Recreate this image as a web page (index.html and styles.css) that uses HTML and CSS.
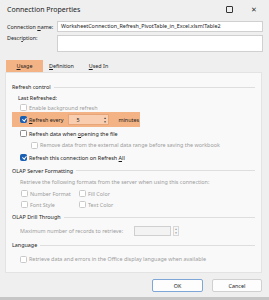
FILE: index.html
```html
<!DOCTYPE html>
<html lang="en">
<head>
    <meta charset="UTF-8">
    <title>Connection Properties</title>
    <link rel="stylesheet" href="styles.css">
</head>
<body>
    <div class="window">
        <div class="titlebar">
            <span class="title">Connection Properties</span>
            <div class="controls">
                <span class="ctl-max"></span>
                <span class="ctl-close">✕</span>
            </div>
        </div>

        <div class="field">
            <label>Connection <u>n</u>ame:</label>
            <div class="input">WorksheetConnection_Refresh_PivotTable_in_Excel.xlsm!Table2</div>
        </div>
        <div class="field field-desc">
            <label>Descr<u>i</u>ption:</label>
            <div class="input input-tall"></div>
        </div>

        <div class="tabs">
            <span class="tab active"><u>U</u>sage</span>
            <span class="tab"><u>D</u>efinition</span>
            <span class="tab"><u>U</u>sed In</span>
        </div>

        <div class="panel">
            <div class="legend h12"><span>Refresh control</span></div>
            <div class="row h10 indent-6">Last Refreshed:</div>
            <div class="row h9 indent-8 disabled"><span class="cb"></span><span>Enable background refresh</span></div>
            <div class="band">
                <span class="cb checked"></span>
                <span><u>R</u>efresh every</span>
                <div class="spin-input">
                    <span>5</span>
                    <span class="arrows"><i>▲</i><i>▼</i></span>
                </div>
                <span>minutes</span>
            </div>
            <div class="row h13 indent-8"><span class="cb"></span><span>Refresh data when <u>o</u>pening the file</span></div>
            <div class="row h10 indent-19 disabled"><span class="cb"></span><span>Remove data from the external data range before saving the workbook</span></div>
            <div class="row h15 indent-8"><span class="cb checked"></span><span>Refresh this connection on Refresh <u>A</u>ll</span></div>

            <div class="legend h11"><span>OLAP Server Formatting</span></div>
            <div class="row h12 indent-8 disabled">Retrieve the following formats from the server when using this connection:</div>
            <div class="row h11 indent-9 disabled">
                <span class="opt"><span class="cb"></span><span>Number Format</span></span>
                <span class="opt"><span class="cb"></span><span>Fill Color</span></span>
            </div>
            <div class="row h11 indent-9 disabled">
                <span class="opt"><span class="cb"></span><span>Font Style</span></span>
                <span class="opt"><span class="cb"></span><span>Text Color</span></span>
            </div>

            <div class="legend h14"><span>OLAP Drill Through</span></div>
            <div class="row h13 indent-8 disabled">
                <span class="max-label">Maximum number of records to retrieve:</span>
                <div class="max-input"></div>
                <span class="max-spin"><i>▲</i><i>▼</i></span>
            </div>

            <div class="legend h16"><span>Language</span></div>
            <div class="row h12 indent-8 disabled"><span class="cb"></span><span>Retrieve data and errors in the Office display language when available</span></div>
        </div>

        <div class="buttons">
            <button class="btn default">OK</button>
            <button class="btn">Cancel</button>
        </div>
    </div>
</body>
</html>
```

FILE: styles.css
```css
body {
    margin: 0;
    font-family: "Noto Sans", "Open Sans", sans-serif;
    font-size: 5.4px;
    color: #1b1b1b;
    background: #efefef;
}

.window {
    width: 269px;
    height: 300px;
    box-sizing: border-box;
    background: #efefef;
    border-bottom: 3px solid #c6c6c6;
    display: flex;
    flex-direction: column;
}

/* title bar */
.titlebar {
    height: 18px;
    display: flex;
    align-items: center;
    padding-left: 7px;
}

.title {
    font-size: 7px;
    color: #222;
}

.controls {
    margin-left: auto;
    display: flex;
    align-items: center;
}

.ctl-max {
    width: 5px;
    height: 5px;
    border: 1px solid #333;
    border-radius: 1px;
    margin-right: 18px;
}

.ctl-close {
    font-size: 7px;
    color: #333;
    margin-right: 12px;
}

/* name + description */
.field {
    display: flex;
    align-items: center;
    padding: 0 6px 0 7px;
    margin-top: 3px;
}

.field label {
    width: 50px;
    flex-shrink: 0;
}

.field-desc {
    align-items: flex-start;
}

.field-desc label {
    line-height: 7px;
}

.input {
    flex: 1;
    height: 11px;
    box-sizing: border-box;
    border: 1px solid #d0d0d0;
    background: #fff;
    padding-left: 3px;
    line-height: 9px;
    white-space: nowrap;
    overflow: hidden;
}

.input-tall {
    height: 17px;
}

/* tabs */
.tabs {
    display: flex;
    margin-top: 8px;
    padding-left: 6px;
    height: 12px;
}

.tab {
    width: 37px;
    text-align: center;
    line-height: 12px;
}

.tab.active {
    background: #f4b385;
}

/* panel */
.panel {
    height: 201px;
    box-sizing: border-box;
    margin: 0 7px 0 5px;
    background: #f9f9f9;
    border: 1px solid #e3e3e3;
    padding: 8px 6px 0 6px;
    display: flex;
    flex-direction: column;
}

.legend {
    display: flex;
    align-items: center;
    gap: 3px;
}

.legend::after {
    content: "";
    flex: 1;
    height: 1px;
    background: #dedede;
}

.row {
    display: flex;
    align-items: center;
    white-space: nowrap;
}

.disabled {
    color: #9c9c9c;
}

.h9 { height: 9px; }
.h10 { height: 10px; }
.h11 { height: 11px; }
.h12 { height: 12px; }
.h13 { height: 13px; }
.h14 { height: 14px; }
.h15 { height: 15px; }
.h16 { height: 16px; }

.indent-6 { padding-left: 6px; }
.indent-8 { padding-left: 8px; }
.indent-9 { padding-left: 9px; }
.indent-19 { padding-left: 19px; }

/* checkboxes */
.cb {
    width: 7px;
    height: 7px;
    box-sizing: border-box;
    border: 1px solid #8a8a8a;
    border-radius: 1.5px;
    background: #fff;
    margin-right: 2px;
    flex-shrink: 0;
    position: relative;
}

.disabled .cb {
    border-color: #c9c9c9;
}

.cb.checked {
    background: #1a5fb4;
    border-color: #1a5fb4;
}

.cb.checked::after {
    content: "";
    position: absolute;
    left: 1.6px;
    top: 0.3px;
    width: 1.5px;
    height: 3px;
    border: solid #fff;
    border-width: 0 1px 1px 0;
    transform: rotate(40deg);
}

.opt {
    display: flex;
    align-items: center;
    width: 58px;
}

/* highlighted refresh row */
.band {
    height: 15px;
    width: 128px;
    box-sizing: border-box;
    background: #f4b385;
    display: flex;
    align-items: center;
    padding-left: 8px;
    white-space: nowrap;
}

.spin-input {
    width: 41px;
    height: 11px;
    box-sizing: border-box;
    margin: 0 9px 0 5px;
    background: #f8cdb0;
    border: 1px solid #e8a57a;
    display: flex;
    align-items: center;
    padding-left: 7px;
    flex-shrink: 0;
}

.arrows,
.max-spin {
    margin-left: auto;
    margin-right: 2px;
    display: flex;
    flex-direction: column;
    font-size: 3px;
    line-height: 4px;
    color: #333;
}

.arrows i,
.max-spin i {
    font-style: normal;
}

/* max records */
.max-label {
    width: 114px;
}

.max-input {
    width: 37px;
    height: 10px;
    box-sizing: border-box;
    border: 1px solid #d0d0d0;
    background: #f3f3f3;
}

.max-spin {
    margin-left: 2px;
    width: 6px;
    height: 10px;
    box-sizing: border-box;
    border: 1px solid #d8d8d8;
    background: #f7f7f7;
    align-items: center;
    color: #999;
}

/* buttons */
.buttons {
    display: flex;
    justify-content: flex-end;
    gap: 9px;
    margin-top: 6px;
    padding-right: 7px;
}

.btn {
    width: 50px;
    height: 13px;
    padding: 0;
    font-family: inherit;
    font-size: 5.4px;
    color: #1b1b1b;
    background: #fdfdfd;
    border: 1px solid #d0d0d0;
    border-radius: 2px;
}

.btn.default {
    width: 51px;
    border-color: #7ea6d6;
}
```
